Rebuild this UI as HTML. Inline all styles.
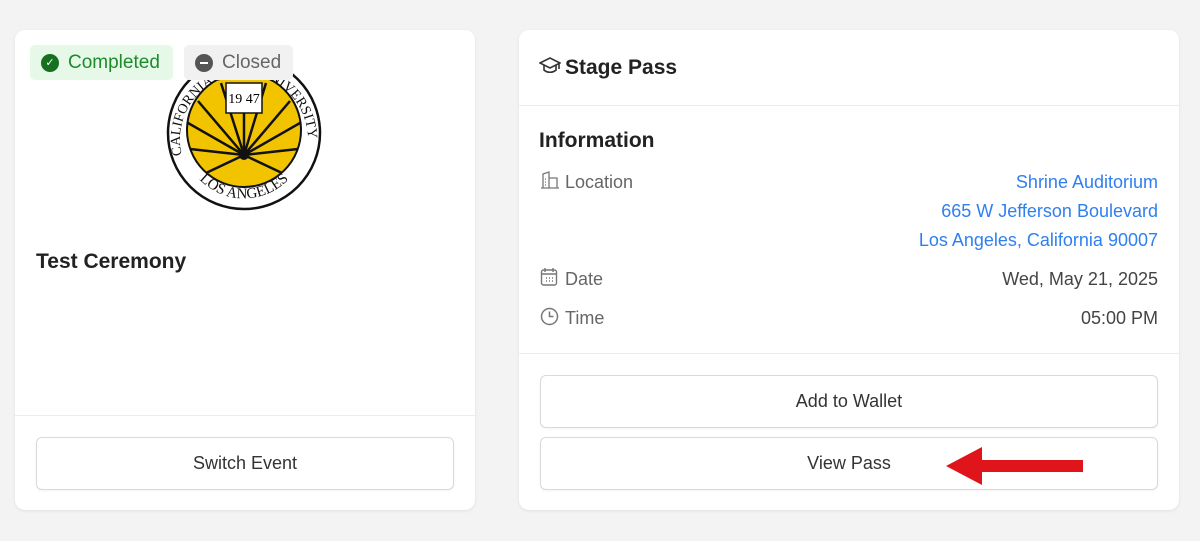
<!DOCTYPE html><html><head><style>
body{margin:0;width:1200px;height:541px;background:#f3f3f4;font-family:"Liberation Sans",sans-serif;position:relative;overflow:hidden}
.card{position:absolute;background:#fff;border-radius:10px;box-shadow:0 1px 3px rgba(0,0,0,.08)}
.btn{position:absolute;border:1px solid #d9d9d9;border-radius:6px;background:#fff;text-align:center;font-size:18px;color:#333;box-sizing:border-box;box-shadow:0 1px 2px rgba(0,0,0,.05)}
.lbl{position:absolute;left:565px;font-size:18px;color:#666}
.val{position:absolute;right:42px;font-size:18px;color:#444;text-align:right}
.blue{color:#2f7ff0}
.ic{position:absolute;left:540px}
</style></head><body>
<div class="card" style="left:15px;top:30px;width:460px;height:480px"></div>
<div style="position:absolute;left:15px;top:415px;width:460px;height:1px;background:#ececec"></div>
<svg style="position:absolute;left:166px;top:55px" width="156" height="156" viewBox="0 0 156 156">
<defs><path id="arc" d="M16 100 A64 64 0 1 1 140 100"/><path id="arc2" d="M22 108 A62 62 0 0 0 134 108"/></defs>
<circle cx="78" cy="78" r="76" fill="#fff" stroke="#111" stroke-width="2.5"/>
<circle cx="78" cy="75" r="57" fill="#f2c400" stroke="#111" stroke-width="2"/>
<g stroke="#111" stroke-width="2.5">
<line x1="78" y1="100" x2="22" y2="68"/><line x1="78" y1="100" x2="32" y2="46"/><line x1="78" y1="100" x2="55" y2="28"/>
<line x1="78" y1="100" x2="134" y2="68"/><line x1="78" y1="100" x2="124" y2="46"/><line x1="78" y1="100" x2="100" y2="28"/>
<line x1="78" y1="100" x2="24" y2="94"/><line x1="78" y1="100" x2="132" y2="94"/><line x1="78" y1="100" x2="78" y2="28"/>
<line x1="78" y1="100" x2="40" y2="118"/><line x1="78" y1="100" x2="116" y2="118"/></g>
<circle cx="78" cy="100" r="5" fill="#111"/>
<rect x="60" y="28" width="36" height="30" fill="#fff" stroke="#111" stroke-width="1.5"/>
<text x="78" y="48" font-family="Liberation Serif" font-size="14" text-anchor="middle">19 47</text>
<text font-family="Liberation Serif" font-size="14" fill="#111"><textPath href="#arc">CALIFORNIA STATE UNIVERSITY</textPath></text>
<text font-family="Liberation Serif" font-size="15" fill="#111"><textPath href="#arc2" startOffset="50%" text-anchor="middle">LOS ANGELES</textPath></text>
</svg>
<div style="position:absolute;left:30px;top:45px;width:143px;height:35px;background:#e6f9e8;border-radius:5px"></div>
<div style="position:absolute;left:41px;top:54px;width:18px;height:18px;border-radius:50%;background:#16701f;color:#fff;font-size:11px;text-align:center;line-height:18px">✓</div>
<div style="position:absolute;left:68px;top:52px;font-size:19px;color:#1f8a2b">Completed</div>
<div style="position:absolute;left:184px;top:45px;width:109px;height:35px;background:#f1f1f1;border-radius:5px"></div>
<div style="position:absolute;left:195px;top:54px;width:18px;height:18px;border-radius:50%;background:#555"><div style="position:absolute;left:5px;top:8px;width:8px;height:2px;background:#fff"></div></div>
<div style="position:absolute;left:222px;top:52px;font-size:19px;color:#666">Closed</div>
<div style="position:absolute;left:36px;top:250px;font-size:21px;font-weight:bold;color:#222">Test Ceremony</div>
<div class="btn" style="left:36px;top:437px;width:418px;height:53px;line-height:51px">Switch Event</div>

<div class="card" style="left:519px;top:30px;width:660px;height:480px"></div>
<div style="position:absolute;left:519px;top:105px;width:660px;height:1px;background:#ececec"></div>
<div style="position:absolute;left:519px;top:353px;width:660px;height:1px;background:#ececec"></div>
<svg style="position:absolute;left:539px;top:57px" width="22" height="18" viewBox="0 0 22 18" fill="none" stroke="#333" stroke-width="1.6"><path d="M1 6 11 1 21 6 11 11Z"/><path d="M5 8v5c3 3 9 3 12 0V8"/><path d="M20 6v6"/></svg>
<div style="position:absolute;left:565px;top:56px;font-size:21px;font-weight:bold;color:#222">Stage Pass</div>
<div style="position:absolute;left:539px;top:129px;font-size:21px;font-weight:bold;color:#222">Information</div>
<svg class="ic" style="top:171px" width="20" height="18" viewBox="0 0 20 18" fill="none" stroke="#777" stroke-width="1.3"><path d="M1 17h18M3 17V3l6-2v16M9 7h8v10"/><path d="M5 8h1M5 11h1M5 14h1"/></svg>
<div class="lbl" style="top:172px">Location</div>
<div class="val blue" style="top:172px">Shrine Auditorium</div>
<div class="val blue" style="top:201px">665 W Jefferson Boulevard</div>
<div class="val blue" style="top:230px">Los Angeles, California 90007</div>
<svg class="ic" style="top:267px" width="18" height="19" viewBox="0 0 18 19" fill="none" stroke="#777" stroke-width="1.4"><rect x="1.5" y="3" width="15" height="15" rx="2"/><path d="M1.5 7h15M5 1v4M13 1v4"/><path d="M6 11h1M9 11h1M12 11h1M6 14h1M9 14h1M12 14h1"/></svg>
<div class="lbl" style="top:269px">Date</div>
<div class="val" style="top:269px">Wed, May 21, 2025</div>
<svg class="ic" style="top:307px" width="19" height="19" viewBox="0 0 19 19" fill="none" stroke="#777" stroke-width="1.5"><circle cx="9.5" cy="9.5" r="8"/><path d="M9.5 4.5v5h4"/></svg>
<div class="lbl" style="top:308px">Time</div>
<div class="val" style="top:308px">05:00 PM</div>
<div class="btn" style="left:540px;top:375px;width:618px;height:53px;line-height:51px">Add to Wallet</div>
<div class="btn" style="left:540px;top:437px;width:618px;height:53px;line-height:51px">View Pass</div>
<svg style="position:absolute;left:944px;top:445px" width="140" height="42" viewBox="0 0 140 42"><path d="M2 21 38 2v13h101v12H38v13Z" fill="#e0141b"/></svg>
</body></html>
